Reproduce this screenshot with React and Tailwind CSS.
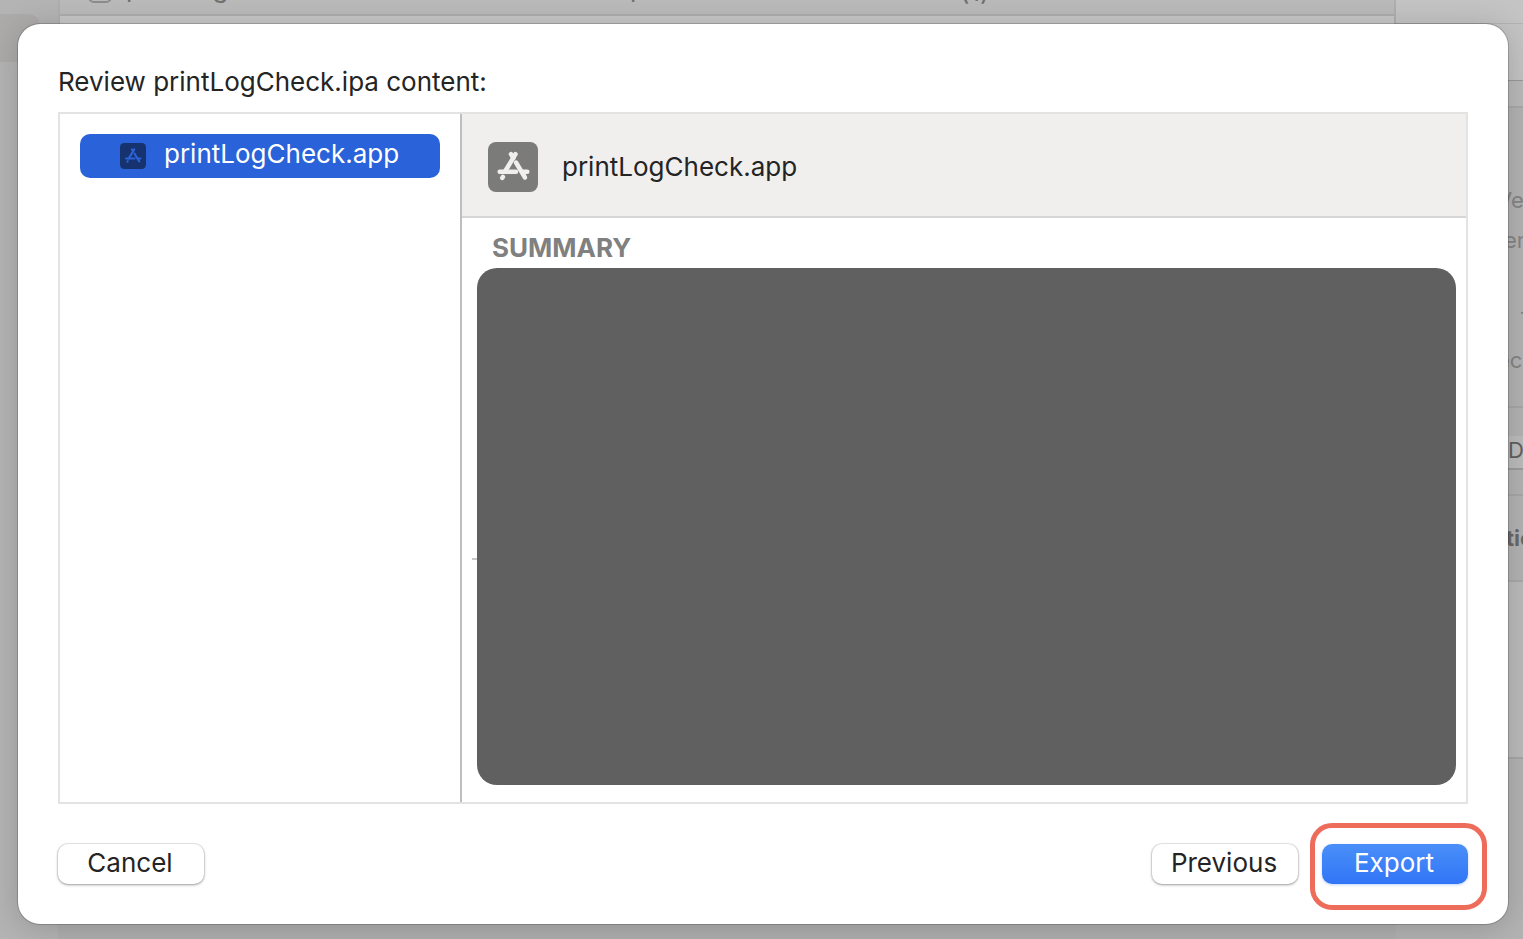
import { clsx } from 'clsx'

const APPS = [{ id: 'printLogCheck', name: 'printLogCheck.app' }]

function AppIcon({ className, strokeWidth = 4.5 }) {
  return (
    <svg viewBox="0 0 50 50" className={className} fill="none" aria-hidden="true">
      <rect width="50" height="50" rx="8" fill="currentColor" />
      <g className="stroke-(--glyph)" strokeWidth={strokeWidth} strokeLinecap="round">
        <path d="M27.5 12.2 L17 29.5" />
        <path d="M23 12.2 L25.3 16" />
        <path d="M28 20.5 L37 35.5" />
        <path d="M11.7 29.7 H28" />
        <path d="M34 29.7 H39.3" />
        <path d="M15 34.8 L14.2 36" />
      </g>
    </svg>
  )
}

function DialogButton({ primary, children }) {
  return (
    <button
      type="button"
      className={clsx(
        'h-10 w-[146px] rounded-[10px] pr-0.5 pb-0.5 text-[26px] leading-[38px]',
        primary
          ? 'bg-linear-to-b from-[#4a8ff8] to-[#3175f6] text-white shadow-[0_1px_3px_rgba(49,117,246,0.3)]'
          : 'bg-white text-[#242424] shadow-[0_0_0_1px_rgba(0,0,0,0.07),0_1px_3px_rgba(0,0,0,0.35)]'
      )}
    >
      {children}
    </button>
  )
}

// Dimmed archive window that sits under the sheet
function ArchiveWindow() {
  return (
    <div aria-hidden="true" className="absolute inset-0 flex overflow-hidden bg-[#b0b0b0] text-[22px] text-[#858585]">
      <div className="w-[58px] shrink-0 bg-[#b4b4b4] pt-3.5">
        <div className="h-12 w-10 rounded-tr-xl bg-[#adaaaa]" />
      </div>

      <div className="flex min-w-0 flex-1 flex-col border-x-2 border-[#afafaf] bg-[#afafaf]">
        <div className="flex h-4 shrink-0 border-b-2 border-[#adadad] bg-[#bababa] text-[26px] leading-8 text-[#707070]">
          <div className="-mt-7 ml-7 h-[31px] w-6 shrink-0 rounded-md border-2 border-[#8c8c8c]" />
          <span className="-mt-7 ml-3.5 w-[504px] shrink-0">printLog</span>
          <span className="-mt-7 w-[330px] shrink-0">p</span>
          <span className="-mt-6">(1)</span>
        </div>
        <div className="h-16 shrink-0 bg-[#c7c7c7]" />
      </div>

      <div className="flex w-[127px] shrink-0 flex-col whitespace-nowrap bg-[#b3b3b3]">
        <div className="h-6 shrink-0 border-b border-[#b4b4b4] bg-[#c4c4c4]" />
        <div className="h-[57px] shrink-0 border-b border-[#999] bg-[#c4c4c4]" />
        <div className="h-[27px] shrink-0 border-b-2 border-[#a9a9a9] bg-[#bababa]" />
        <div className="h-[300px] shrink-0 border-b-2 border-[#a7a7a7] pt-[72px] leading-10">
          <p className="pl-[101px]">Ve</p>
          <p className="pl-[108px]">en</p>
          <p className="mt-10 pl-[124px]">T</p>
          <p className="pl-[101px]">ec</p>
        </div>
        <div className="h-[88px] shrink-0 border-b-2 border-[#a7a7a7] pt-7">
          <div className="h-[34px] border-b-2 border-[#9c9c9c] bg-[#bcbcbc] pl-[112px] leading-7 text-[#606060]">D</div>
        </div>
        <div className="h-[86px] shrink-0 border-b-2 border-[#a9a9a9] pl-[110px] font-bold leading-[84px] text-[#696969]">tio</div>
        <div className="h-[177px] shrink-0 border-b-2 border-[#a7a7a7] bg-[#bbb]" />
      </div>
    </div>
  )
}

export default function App() {
  return (
    <div className="relative flex min-h-screen font-['Inter','Liberation_Sans',sans-serif]">
      <ArchiveWindow />

      <main
        role="dialog"
        aria-labelledby="review-title"
        className="relative mt-6 mr-[15px] mb-[15px] ml-[18px] flex min-w-0 flex-1 flex-col rounded-[22px] bg-white p-10 text-[#242424] shadow-[0_0_0_1px_rgba(0,0,0,0.18),0_4px_32px_rgba(0,0,0,0.18)]"
      >
        <h1 id="review-title" className="mt-0.5 mb-3.5 text-[26px] leading-8">Review printLogCheck.ipa content:</h1>

        <div className="flex flex-1 border-2 border-[#e3e3e3]">
          <nav className="w-[402px] shrink-0 border-r-2 border-[#bebebe] p-5">
            {APPS.map(app => (
              <button
                key={app.id}
                type="button"
                className="flex h-11 w-full items-center gap-[18px] rounded-[10px] bg-[#2962d9] pl-10 text-[26px] text-white"
              >
                <AppIcon className="size-[26px] text-[#17336f] [--glyph:#2b62d6]" strokeWidth={4} />
                <span className="pb-1 leading-8">{app.name}</span>
              </button>
            ))}
          </nav>

          <section className="flex min-w-0 flex-1 flex-col">
            <header className="flex h-[104px] items-center gap-6 border-b-2 border-[#d6d6d6] bg-[#f0efed] px-[26px] pt-1">
              <AppIcon className="size-[50px] text-[#7b7b7a] [--glyph:#f0efed]" />
              <h2 className="text-[26px] leading-8">printLogCheck.app</h2>
            </header>
            <h3 className="mt-3.5 mb-1 ml-[30px] text-[26px] font-bold leading-8 text-[#808080]">SUMMARY</h3>
            <div className="relative mr-2.5 mb-[17px] ml-[15px] flex-1 rounded-[20px] bg-[#606060]">
              <div className="absolute top-[290px] -left-[5px] h-0.5 w-[5px] bg-[#c8c8c8]" />
            </div>
          </section>
        </div>

        <footer className="mt-10 flex items-center gap-6">
          <DialogButton>Cancel</DialogButton>
          <div className="flex-1" />
          <DialogButton>Previous</DialogButton>
          <div className="relative">
            <DialogButton primary>Export</DialogButton>
            <div className="pointer-events-none absolute -top-[21px] -right-[19px] -bottom-[26px] -left-3 rounded-[22px] border-5 border-[#ed6c5a]" />
          </div>
        </footer>
      </main>
    </div>
  )
}
